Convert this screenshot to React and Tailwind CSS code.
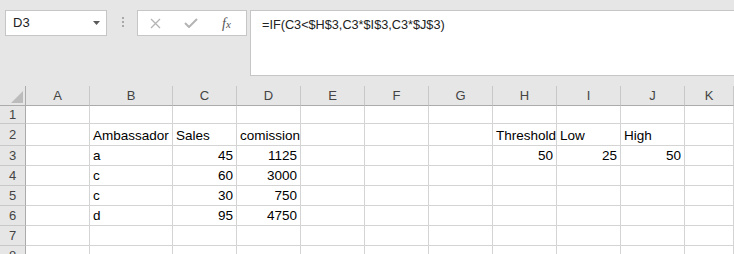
const cols = ['A', 'B', 'C', 'D', 'E', 'F', 'G', 'H', 'I', 'J', 'K'];

// row number, then cell values keyed by column; numbers are right aligned
const rows = [
  [1, {}],
  [2, { B: 'Ambassador', C: 'Sales', D: 'comission', H: 'Threshold', I: 'Low', J: 'High' }],
  [3, { B: 'a', C: 45, D: 1125, H: 50, I: 25, J: 50 }],
  [4, { B: 'c', C: 60, D: 3000 }],
  [5, { B: 'c', C: 30, D: 750 }],
  [6, { B: 'd', C: 95, D: 4750 }],
  [7, {}],
  [8, {}]
];

const ui = { fontFamily: '"Liberation Sans", Arial, sans-serif' };

function TopBar() {
  return (
    <div className="flex h-[86px] items-start bg-[#e6e6e6] pl-[5px] pt-[10px]" style={ui}>
      <div className="flex h-[26px] w-[102px] items-center justify-between border border-[#c6c6c6] bg-white pl-[7px] pr-[6px] text-[13px] text-[#222]">
        <span>D3</span>
        <svg width="7" height="4" viewBox="0 0 7 4"><path d="M0 0h7L3.5 4z" fill="#5a5a5a" /></svg>
      </div>
      <div className="ml-[15px] mt-[7px] flex flex-col gap-[2px]">
        <span className="h-[2px] w-[2px] bg-[#a8a8a8]" />
        <span className="h-[2px] w-[2px] bg-[#a8a8a8]" />
        <span className="h-[2px] w-[2px] bg-[#a8a8a8]" />
      </div>
      <div className="ml-[13px] flex h-[26px] w-[110px] items-center border border-[#c6c6c6] bg-white">
        <svg className="ml-[12px]" width="11" height="11" viewBox="0 0 11 11">
          <path d="M1 1l9 9M10 1l-9 9" stroke="#b4b4b4" strokeWidth="1.3" fill="none" />
        </svg>
        <svg className="ml-[23px]" width="14" height="10" viewBox="0 0 14 10">
          <path d="M1 5l4 4 8-8" stroke="#b4b4b4" strokeWidth="2" fill="none" />
        </svg>
        <span className="ml-[24px] text-[14px] italic text-[#555]" style={{ fontFamily: '"Liberation Serif", serif' }}>
          f<span className="text-[11px]">x</span>
        </span>
      </div>
      <div className="ml-[3px] h-[66px] flex-1 border border-r-0 border-[#c6c6c6] bg-white pl-[11px] pt-[5px] text-[12.7px] text-[#222]">
        =IF(C3&lt;$H$3,C3*$I$3,C3*$J$3)
      </div>
    </div>
  );
}

function Grid() {
  return (
    <div
      className="grid grid-cols-[26px_64px_83px_repeat(8,64px)_1fr] grid-rows-[20px_18px_22px_20px_20px_20px_20px_20px_20px] bg-white"
      style={ui}
    >
      <div className="flex items-end justify-end border-b border-r border-[#ababab] bg-[#e6e6e6] pb-[2px] pr-[2px]">
        <svg width="12" height="12" viewBox="0 0 12 12"><path d="M12 0v12H0z" fill="#bcbcbc" /></svg>
      </div>
      {cols.map((c) => (
        <div
          key={c}
          className="flex items-center justify-center border-b border-r border-b-[#ababab] border-r-[#c8c8c8] bg-[#e6e6e6] text-[13px] text-[#444]"
        >
          {c}
        </div>
      ))}
      {rows.map(([n, data]) => (
        <Row key={n} n={n} data={data} />
      ))}
    </div>
  );
}

function Row({ n, data }) {
  return (
    <>
      <div className="flex items-center justify-center border-b border-r border-b-[#c8c8c8] border-r-[#ababab] bg-[#e6e6e6] text-[13px] text-[#444]">
        {n}
      </div>
      {cols.map((c) => {
        const v = data[c];
        const num = typeof v === 'number';
        return (
          <div
            key={c}
            className={`flex items-end overflow-hidden whitespace-nowrap border-b border-r border-[#d4d4d4] pb-[1px] text-[13.5px] leading-[16px] text-black ${num ? 'justify-end pr-[3px]' : 'justify-start pl-[3px]'}`}
          >
            {v}
          </div>
        );
      })}
    </>
  );
}

export default function App() {
  return (
    <div className="h-[254px] w-[734px] overflow-hidden bg-white">
      <TopBar />
      <Grid />
    </div>
  );
}
